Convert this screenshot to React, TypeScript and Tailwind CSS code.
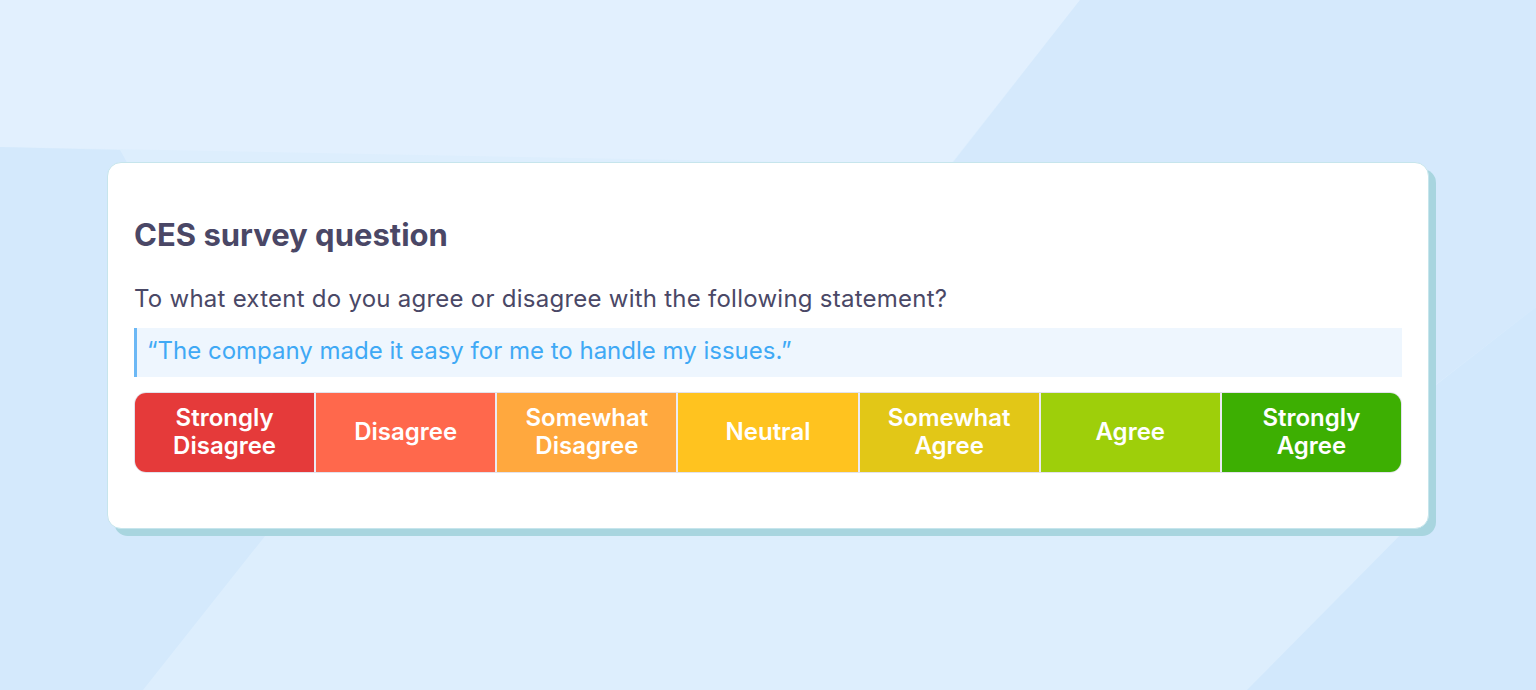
import React from "react";

const OPTIONS = [
  { label: ["Strongly", "Disagree"], color: "bg-[#e53a3a]" },
  { label: ["Disagree"], color: "bg-[#ff684c]" },
  { label: ["Somewhat", "Disagree"], color: "bg-[#ffa83e]" },
  { label: ["Neutral"], color: "bg-[#ffc31f]" },
  { label: ["Somewhat", "Agree"], color: "bg-[#e2c717]" },
  { label: ["Agree"], color: "bg-[#9ecf0a]" },
  { label: ["Strongly", "Agree"], color: "bg-[#3daf02]" },
];

// soft geometric backdrop behind the card
function Backdrop() {
  return (
    <svg className="absolute inset-0 h-full w-full" viewBox="0 0 1536 690" preserveAspectRatio="none">
      <rect width="1536" height="690" fill="#ddeefd" />
      <polygon points="0,0 1080,0 950,165 0,147" fill="#e2f0fe" />
      <polygon points="1080,0 1536,0 1536,307 1300,490 900,230" fill="#d5e9fc" />
      <polygon points="1536,307 1536,690 1247,690 1420,515 1400,413" fill="#d2e8fc" />
      <polygon points="0,147 120,150 307,483 143,690 0,690" fill="#d4e9fc" />
    </svg>
  );
}

export default function App() {
  return (
    <div className="relative h-[690px] w-full overflow-hidden font-['Inter',sans-serif]">
      <Backdrop />
      <div className="relative flex h-full items-center justify-center">
        <div className="w-[1322px] rounded-[14px] border border-[#c6e5ec] bg-white px-[26px] pt-[53px] pb-[55px] shadow-[7px_7px_0_#a8d5df]">
          <h1 className="text-[31px] leading-[38px] font-bold text-[#4a4766]">CES survey question</h1>
          <p className="mt-[30px] text-[24px] leading-[30px] tracking-[0.25px] text-[#4a4866]">
            To what extent do you agree or disagree with the following statement?
          </p>
          <div className="mt-[14px] flex h-[49px] items-center border-l-[3px] border-[#6cb8f5] bg-[#eef6fe] pl-[10px] pb-[3px]">
            <span className="text-[24px] text-[#3fa9f5]">“The company made it easy for me to handle my issues.”</span>
          </div>
          <div className="mt-[15px] flex h-[81px] overflow-hidden rounded-[12px] border border-[#e2e2ec]">
            {OPTIONS.map((o, i) => (
              <div
                key={i}
                className={`flex flex-1 flex-col items-center justify-center ${o.color} ${i > 0 ? "border-l-2 border-[#ecebf2]" : ""}`}
              >
                {o.label.map((l) => (
                  <span key={l} className="text-[24px] leading-[28px] font-semibold text-white">{l}</span>
                ))}
              </div>
            ))}
          </div>
        </div>
      </div>
    </div>
  );
}
